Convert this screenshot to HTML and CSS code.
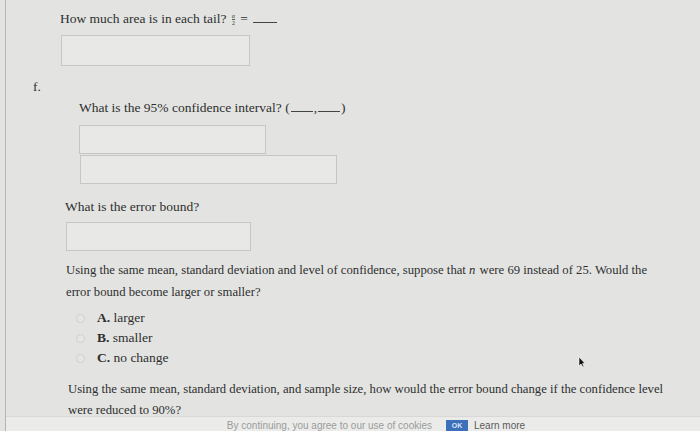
FILE: index.html
```html
<!DOCTYPE html>
<html>
<head>
<meta charset="utf-8">
<link rel="stylesheet" href="styles.css">
</head>
<body>
<div class="page">
  <div class="q q1">How much area is in each tail? <span class="frac"><span class="num">α</span><span class="den">2</span></span> = <span class="blank"></span></div>
  <div class="box box1"></div>
  <div class="label">f.</div>
  <div class="q q2">What is the 95% confidence interval? (<span class="blank sm"></span>,<span class="blank sm"></span>)</div>
  <div class="box box2"></div>
  <div class="box box3"></div>
  <div class="q q3">What is the error bound?</div>
  <div class="box box4"></div>
  <p class="para p1">Using the same mean, standard deviation and level of confidence, suppose that <span class="var">n</span> were 69 instead of 25. Would the error bound become larger or smaller?</p>
  <ul class="opts">
    <li><span class="radio"></span><b>A.</b>&nbsp;larger</li>
    <li><span class="radio"></span><b>B.</b>&nbsp;smaller</li>
    <li><span class="radio"></span><b>C.</b>&nbsp;no change</li>
  </ul>
  <p class="para p2">Using the same mean, standard deviation, and sample size, how would the error bound change if the confidence level were reduced to 90%?</p>
  <div class="cookie">
    <span class="ctext">By continuing, you agree to our use of cookies</span>
    <span class="ok">OK</span>
    <span class="learn">Learn more</span>
  </div>
  <svg class="cursor" width="8" height="12" viewBox="0 0 8 12"><path d="M1 1 L1 10 L3 8 L5 11 L6 10.5 L4.5 7.5 L7 7.5 Z" fill="#111" stroke="#fff" stroke-width="0.6"/></svg>
</div>
</body>
</html>
```
FILE: styles.css
```css
html, body {
  margin: 0;
  padding: 0;
  background: #e3e4e2;
}
.page {
  position: relative;
  width: 700px;
  height: 431px;
  overflow: hidden;
  box-sizing: border-box;
  border-left: 1px solid #b5b6b4;
  margin-left: 5px;
  padding-top: 11px;
  font-family: "Liberation Serif", "DejaVu Serif", serif;
  font-size: 13.5px;
  color: #2e2f2e;
}
.q {
  height: 16px;
  line-height: 16px;
  white-space: nowrap;
}
.q1 { margin-left: 54px; }
.frac {
  display: inline-flex;
  flex-direction: column;
  vertical-align: middle;
  font-size: 6px;
  line-height: 6px;
  text-align: center;
  margin: 0 2px;
}
.frac .num { border-bottom: 0.5px solid #555; }
.blank {
  display: inline-block;
  width: 24px;
  border-bottom: 1px solid #444;
  vertical-align: baseline;
  margin-left: 2px;
}
.blank.sm { width: 22px; margin: 0 1px; }
.box {
  box-sizing: border-box;
  border: 1px solid #c6c7c5;
  background: #e8e9e7;
}
.box1 { margin: 8px 0 0 55px; width: 189px; height: 31px; }
.label { margin: 14px 0 0 27px; height: 14px; line-height: 14px; }
.q2 { margin: 6px 0 0 73px; }
.box2 { margin: 9px 0 0 73px; width: 187px; height: 29px; }
.box3 { margin: 1px 0 0 74px; width: 257px; height: 29px; }
.q3 { margin: 15px 0 0 59px; }
.box4 { margin: 7px 0 0 60px; width: 185px; height: 29px; }
.para {
  margin: 0;
  line-height: 22px;
  width: 590px;
  font-size: 12.7px;
}
.var { font-style: italic; padding-right: 1px; }
.p1 { margin: 8px 0 0 60px; }
.opts {
  list-style: none;
  margin: 5px 0 0 70px;
  padding: 0;
}
.opts li {
  display: flex;
  align-items: center;
  height: 20px;
}
.opts b { font-weight: bold; }
.radio {
  width: 7px;
  height: 7px;
  border: 1px solid #cfd0ce;
  border-radius: 50%;
  margin-right: 12px;
  background: #e6e7e5;
}
.p2 { margin: 11px 0 0 62px; width: 600px; line-height: 21px; }
.cookie {
  position: absolute;
  left: -6px;
  right: 0;
  top: 416px;
  height: 20px;
  background: #ebecea;
  border-top: 1px solid #d8d9d7;
  font-family: "Liberation Sans", Arial, sans-serif;
  font-size: 10px;
  color: #6a6b6a;
  display: flex;
  align-items: flex-start;
  padding-top: 3px;
  box-sizing: border-box;
}
.ctext {
  margin-left: 192px;
  width: 240px;
  text-align: right;
  color: #9a9b9a;
}
.ok {
  margin-left: 14px;
  background: #3d6fba;
  color: #dbe6f5;
  font-size: 7px;
  font-weight: bold;
  width: 22px;
  height: 14px;
  text-align: center;
  line-height: 12px;
}
.learn { margin-left: 6px; color: #5a5b5a; }
.cursor {
  position: absolute;
  left: 572px;
  top: 356px;
}
```
